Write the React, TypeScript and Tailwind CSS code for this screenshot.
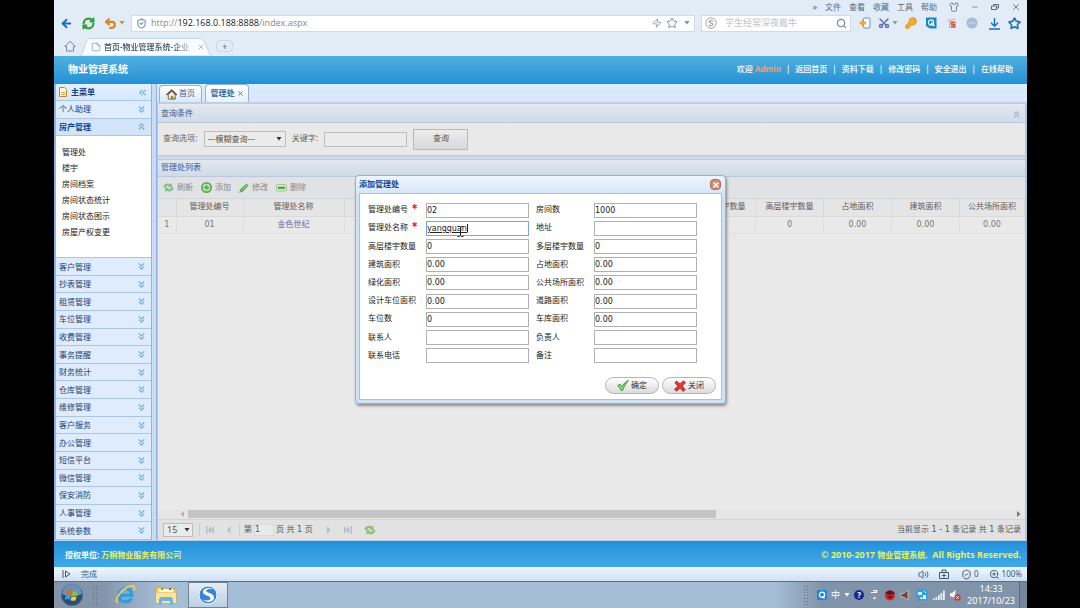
import { useState } from 'react';
import type { ReactNode } from 'react';
import {
  ArrowLeft,
  ChevronsDown,
  ChevronsLeft,
  ChevronsUp,
  CirclePlus,
  KeyRound,
  Minus,
  RefreshCw,
  Scissors,
  Search,
  ShieldCheck,
  Shirt,
  Star,
  StickyNote,
  Undo2,
  Volume2,
  X,
  Zap,
  ZoomIn,
} from 'lucide-react';

const subMenu = ['管理处', '楼宇', '房间档案', '房间状态统计', '房间状态图示', '房屋产权变更'];

const modules = [
  '客户管理', '抄表管理', '租赁管理', '车位管理', '收费管理', '事务提醒', '财务统计', '仓库管理',
  '维修管理', '客户服务', '办公管理', '短信平台', '微信管理', '保安消防', '人事管理', '系统参数',
];

const headerLinks = ['返回首页', '资料下载', '修改密码', '安全退出', '在线帮助'];

interface FieldDef {
  name: string;
  label: string;
  value: string;
  required?: boolean;
}

const fields: FieldDef[] = [
  { name: 'code', label: '管理处编号', value: '02', required: true },
  { name: 'rooms', label: '房间数', value: '1000' },
  { name: 'title', label: '管理处名称', value: 'yangquan', required: true },
  { name: 'address', label: '地址', value: '' },
  { name: 'highRise', label: '高层楼宇数量', value: '0' },
  { name: 'multiStorey', label: '多层楼宇数量', value: '0' },
  { name: 'buildArea', label: '建筑面积', value: '0.00' },
  { name: 'landArea', label: '占地面积', value: '0.00' },
  { name: 'greenArea', label: '绿化面积', value: '0.00' },
  { name: 'publicArea', label: '公共场所面积', value: '0.00' },
  { name: 'parkingArea', label: '设计车位面积', value: '0.00' },
  { name: 'roadArea', label: '道路面积', value: '0.00' },
  { name: 'parkingCount', label: '车位数', value: '0' },
  { name: 'garageArea', label: '车库面积', value: '0.00' },
  { name: 'contact', label: '联系人', value: '' },
  { name: 'manager', label: '负责人', value: '' },
  { name: 'phone', label: '联系电话', value: '' },
  { name: 'remark', label: '备注', value: '' },
];

const columns = [
  { title: '', value: '1', width: 'w-[18px]' },
  { title: '管理处编号', value: '01', width: 'w-[67px]' },
  { title: '管理处名称', value: '金色世纪', width: 'w-[101px]' },
  { title: '', value: '', width: '' },
  { title: '多层楼宇数量', value: '', width: 'w-[68px]' },
  { title: '高层楼宇数量', value: '0', width: 'w-[68px]' },
  { title: '占地面积', value: '0.00', width: 'w-[68px]' },
  { title: '建筑面积', value: '0.00', width: 'w-[68px]' },
  { title: '公共场所面积', value: '0.00', width: 'w-[65px]' },
];

const Caret = ({ className = '' }: { className?: string }) => (
  <svg viewBox="0 0 6 4" className={`h-1 w-1.5 shrink-0 ${className}`} fill="currentColor">
    <path d="M0.5 0h5L3 3.6z" />
  </svg>
);

const Recycle = ({ className = '' }: { className?: string }) => (
  <svg viewBox="0 0 14 12" className={className} fill="currentColor">
    <path d="M.5 6C.5 1.500 6-.5 9.500 1.800L11 .3l.8 5.600-5.600-.6 1.500-1.500C6 3 4 4 3.700 6z" />
    <path d="M13.500 6C13.500 10.500 8 12.500 4.500 10.200L3 11.700l-.8-5.600 5.600.6-1.500 1.500C8 9 10 8 10.300 6z" />
  </svg>
);

const BrowserChrome = () => (
  <header className="bg-[#e1ecf6] text-[#56687f]">
    <div className="flex h-[14px] items-center justify-end pr-[6px] text-[8px]">
      <span className="mr-2 text-[9px]">»</span>
      <nav className="flex gap-2">
        {['文件', '查看', '收藏', '工具', '帮助'].map((item) => (
          <a key={item} href="#">
            {item}
          </a>
        ))}
      </nav>
      <Shirt className="ml-3 h-2.5 w-2.5" strokeWidth={1.8} />
      <Minus className="ml-3 h-2 w-2" />
      <svg viewBox="0 0 8 8" className="ml-3 h-2 w-2" fill="none" stroke="currentColor">
        <path d="M2.500 2.500v-1h5v3.500h-2M.5 3h5v3.500h-5z" />
      </svg>
      <X className="ml-3 h-2.5 w-2.5" />
    </div>

    <div className="flex h-[18px] items-center pr-[6px]">
      <button className="ml-1.5" aria-label="后退">
        <ArrowLeft className="h-[13px] w-[13px] text-[#1c70b8]" strokeWidth={3.5} />
      </button>
      <button className="ml-[9px]" aria-label="刷新">
        <RefreshCw className="h-[13px] w-[13px] text-[#2fa336]" strokeWidth={4} />
      </button>
      <button className="ml-[9px] flex items-center gap-0.5" aria-label="恢复">
        <Undo2 className="h-[13px] w-[13px] text-[#dd8423]" strokeWidth={4} />
        <Caret className="text-[#dd8423]" />
      </button>
      <div className="ml-1.5 flex h-[17px] flex-1 items-center border border-[#cfdbe8] bg-white pl-1 pr-1">
        <ShieldCheck className="h-[11px] w-[11px] text-[#6f9cc4]" strokeWidth={2.5} />
        <div className="ml-1 flex-1 font-['Open_Sans'] text-[9px] text-[#888]">
          http://<span className="text-[#222]">192.168.0.188:8888</span>/index.aspx
        </div>
        <Zap className="h-2.5 w-2.5 text-[#7590ac]" />
        <Star className="ml-1 h-3 w-3 text-[#6d8bac]" />
        <Caret className="ml-1.5 text-[#7a8ea5]" />
      </div>
      <div className="ml-1.5 flex h-[17px] w-[150px] items-center border border-[#cfdbe8] bg-white px-[3px]">
        <svg viewBox="0 0 12 12" className="h-3 w-3 shrink-0" fill="none" stroke="#a5a5a5">
          <circle cx="6" cy="6" r="5.200" />
          <path d="M8 4C6.500 3 4 3.500 4.200 4.700 4.400 6 7.900 5.800 7.900 7.300 7.900 8.800 5 8.900 3.900 7.800" strokeWidth="1.300" />
        </svg>
        <input
          type="text"
          aria-label="搜索"
          placeholder="学生经常深夜搬牛"
          className="ml-2 min-w-0 flex-1 text-[9px] outline-none placeholder:text-[#bfc3c8]"
        />
        <Search className="h-[11px] w-[11px] shrink-0 text-[#6a89a8]" strokeWidth={2.5} />
      </div>
      <div className="ml-2 flex items-center">
        <svg viewBox="0 0 12 12" className="h-3 w-3">
          <rect x="4.500" y="1" width="6.500" height="10" rx="1" fill="#f5f9fc" stroke="#6b90b8" />
          <path d="M0 6l4.500-4v2.500H7v3H4.500V10z" fill="#efac35" />
        </svg>
        <Scissors className="ml-[7px] h-3 w-3 -rotate-90 text-[#5e72b6]" strokeWidth={3} />
        <Caret className="ml-0.5 text-[#8a98aa]" />
        <KeyRound className="ml-[7px] h-3 w-3 fill-[#f2b04a] text-[#eca22c]" strokeWidth={3.5} />
        <svg viewBox="0 0 12 12" className="ml-2 h-3 w-3">
          <path d="M1 .5h10.500v11H5L1 9z" fill="#1b86c2" />
          <circle cx="6" cy="5.500" r="2.600" fill="none" stroke="#fff" strokeWidth="1.200" />
          <path d="M6 5.500l3.500 3.500" stroke="#fff" strokeWidth="1.200" />
        </svg>
        <svg viewBox="0 0 12 12" className="ml-[9px] h-3 w-3" fill="none">
          <path d="M1.500 3.500l8-1.500M3.500 4.500h6v6h-6z" stroke="#e9a29a" />
          <path d="M8.500 5.500H5.500v2h3v2H5" stroke="#e0483a" strokeWidth="1.300" />
        </svg>
        <svg viewBox="0 0 12 12" className="ml-2 h-3 w-3">
          <circle cx="6" cy="6" r="5.500" fill="#a5bbd6" />
          <path d="M3 6h1.200M5.400 6h1.200M7.800 6H9" stroke="#fff" strokeWidth="1.200" />
        </svg>
        <svg viewBox="0 0 13 13" className="ml-[10px] h-[13px] w-[13px]" fill="none" stroke="#1c70b8" strokeWidth="1.400">
          <path d="M6.500 1v8M3 5.800l3.500 3.500L10 5.800M1 12h11" />
        </svg>
        <Star className="ml-[7px] h-[13px] w-[13px] text-[#1c70b8]" strokeWidth={3} />
      </div>
    </div>

    <div className="flex h-6 items-end">
      <svg viewBox="0 0 12 12" className="mb-1 ml-[10px] h-3 w-3" fill="none" stroke="#7088a2">
        <path d="M.8 6.500L6 1.200l5.200 5.300H9.500V11h-7V6.500z" strokeLinejoin="round" />
      </svg>
      {/* slanted tab with the page title fading out under the close mark */}
      <div className="relative ml-1 flex h-[18px] w-[132px] items-center pl-[11px]">
        <svg viewBox="0 0 132 18" preserveAspectRatio="none" className="absolute inset-0 h-full w-full">
          <path d="M0 18C4 16 5 2 9 .5h112C125 2 128 16 132 18z" fill="#fafdff" stroke="#c6d4e4" />
        </svg>
        <StickyNote className="relative h-2.5 w-2.5 text-[#84a5c9]" />
        <span className="relative ml-[3px] whitespace-nowrap bg-gradient-to-r from-[#33475c] from-80% to-[#b4c2d0] bg-clip-text text-[8px] font-medium text-transparent">
          首页-物业管理系统-企业
        </span>
        <X className="relative ml-2 h-2 w-2 text-[#8c9aaa]" />
      </div>
      <button
        aria-label="新标签页"
        className="mb-1 ml-1 flex h-3 w-[17px] items-center justify-center rounded-sm border border-[#cbd7e5] text-[9px] leading-none"
      >
        +
      </button>
    </div>
  </header>
);

const SideItem = ({ label, open = false }: { label: string; open?: boolean }) => (
  <button
    className={`flex min-h-4 w-full flex-1 items-center justify-between border-b border-[#a9c6ea] pl-[3px] pr-1 text-left text-[8px] leading-none ${
      open ? 'bg-[#d3e3f8] font-bold text-[#15428b]' : 'bg-[#dfecfd] text-[#1f3f70]'
    }`}
  >
    {label}
    {open ? (
      <ChevronsUp className="h-[11px] w-[11px] text-[#74aedb]" strokeWidth={2.5} />
    ) : (
      <ChevronsDown className="h-[11px] w-[11px] text-[#74aedb]" strokeWidth={2.5} />
    )}
  </button>
);

const Sidebar = () => (
  <aside className="flex w-[98px] shrink-0 flex-col border-l-2 border-r border-[#8db2e3] bg-[#dfecfd]">
    <div className="flex h-[17px] items-center justify-between border-b border-[#a9c6ea] bg-gradient-to-b from-[#e2f1ff] to-[#d6e8fc] px-[3px] text-[8px] font-bold text-[#15428b]">
      <svg viewBox="0 0 8 10" className="h-2.5 w-2">
        <path d="M.5.5h5l2 2v7h-7z" fill="#fff8dc" stroke="#b98a2e" />
        <path d="M2 7.500h4M2 5.500h4" stroke="#e3a93c" />
      </svg>
      <span className="ml-1 flex-1">主菜单</span>
      <ChevronsLeft className="h-[11px] w-[11px] text-[#74aedb]" strokeWidth={2.5} />
    </div>
    <SideItem label="个人助理" />
    <SideItem label="房产管理" open />
    <ul className="min-h-[122px] border-b border-[#a9c6ea] bg-white pl-1.5 pt-2 text-[8px] leading-4 text-[#222]">
      {subMenu.map((item) => (
        <li key={item}>
          <a href="#">{item}</a>
        </li>
      ))}
    </ul>
    {modules.map((item) => (
      <SideItem key={item} label={item} />
    ))}
  </aside>
);

const ToolButton = ({ icon, label }: { icon: ReactNode; label: string }) => (
  <button className="flex items-center gap-[3px]">
    {icon}
    {label}
  </button>
);

const PanelTitle = ({ title, children }: { title: string; children?: ReactNode }) => (
  <div className="flex h-[17px] items-center justify-between border-b border-[#b9c8dc] bg-gradient-to-b from-[#e2e7ee] to-[#d1dae7] px-[3px] text-[8px] font-medium text-[#5b74a0]">
    <h2>{title}</h2>
    {children}
  </div>
);

const PagerMark = ({ d }: { d: string }) => (
  <svg viewBox="0 0 8 8" className="h-2 w-2" fill="#b4bfce">
    <path d={d} />
  </svg>
);

const Workspace = () => (
  <section className="flex min-w-0 flex-1 flex-col font-['DejaVu_Sans','Noto_Sans_CJK_SC',sans-serif]">
    <div className="flex h-5 items-end gap-[3px] border-b-2 border-[#b9cfea] bg-gradient-to-b from-[#d7f1ff] to-[#dbe8fc] to-40% pl-0.5 text-[8px] text-[#41669c]">
      <button className="flex h-[17px] w-[43px] items-center justify-center gap-0.5 rounded-t-sm border border-b-0 border-[#8db2e3] bg-gradient-to-b from-white to-[#d9e8fb]">
        <svg viewBox="0 0 12 12" className="h-[11px] w-[11px]">
          <path d="M2.500 6v5h7.500V6L6.200 2.500z" fill="#f7f0dc" stroke="#6b5a43" />
          <path d="M.5 6.500L6.200 1.200 11.800 6.500" fill="none" stroke="#504335" strokeWidth="1.400" />
          <path d="M5.200 7.500h2.300V11H5.200z" fill="#a9702e" />
          <path d="M8 9h2.500v2H8z" fill="#69a83b" />
        </svg>
        首页
      </button>
      <button className="flex h-[18px] w-11 items-center justify-center gap-0.5 rounded-t-sm border border-b-0 border-[#8db2e3] bg-gradient-to-b from-white to-[#e6f1ff] font-bold">
        管理处
        <X className="h-[7px] w-[7px]" strokeWidth={3} />
      </button>
    </div>

    <div className="flex flex-1 flex-col border-l border-r-2 border-[#b5c7de] bg-[#e9e9e9] pt-0.5 text-[#666]">
      <PanelTitle title="查询条件">
        <ChevronsUp className="h-[11px] w-[11px] text-[#93bcd6]" strokeWidth={2.5} />
      </PanelTitle>
      <form className="flex h-8 items-center pl-[5px] text-[8px]">
        <label htmlFor="queryType">查询选项:</label>
        <span className="relative ml-1.5 flex items-center">
          <select
            id="queryType"
            className="h-4 w-[82px] appearance-none border border-[#bdbdbd] bg-[#ebebeb] pl-[3px] font-['Noto_Sans','Noto_Sans_CJK_SC',sans-serif] text-[8px] leading-[14px] text-[#555]"
          >
            <option>---模糊查询---</option>
          </select>
          <Caret className="pointer-events-none absolute right-1 text-[#333]" />
        </span>
        <label htmlFor="keyword" className="ml-1.5">
          关键字:
        </label>
        <input id="keyword" type="text" className="ml-1.5 h-[15px] w-[83px] border border-[#bdbdbd] bg-[#ebebeb]" />
        <button
          type="button"
          className="ml-1.5 h-[21px] w-[55px] border border-[#b9b9b9] bg-gradient-to-b from-[#ececec] to-[#d9d9d9] text-[#555]"
        >
          查询
        </button>
      </form>

      <div className="h-[5px] border-y border-[#bccadc] bg-[#cfdae8]" />
      <PanelTitle title="管理处列表" />
      <div className="flex h-[22px] items-center gap-2 border-b border-[#d2d5da] bg-[#e1e2e4] pl-[5px] text-[8px] text-[#888]">
        <ToolButton icon={<Recycle className="h-[11px] w-[11px] text-[#86bd86]" />} label="刷新" />
        <ToolButton
          icon={<CirclePlus className="h-[11px] w-[11px] fill-[#cfe6ca] text-[#5faa57]" strokeWidth={4} />}
          label="添加"
        />
        <ToolButton
          icon={
            <svg viewBox="0 0 10 10" className="h-2.5 w-2.5">
              <path d="M0 10l1.500-4L7.500.5 9.500 2.500 4 8.500z" fill="#5ca856" />
              <path d="M2.500 7L8 1.800" stroke="#a5d49c" />
            </svg>
          }
          label="修改"
        />
        <ToolButton
          icon={
            <svg viewBox="0 0 11 8" className="h-2 w-[11px]">
              <rect x=".5" y=".5" width="10" height="6.500" rx="1" fill="#d4e8d0" stroke="#9cc996" />
              <path d="M2 3.800h7" stroke="#4f9f48" strokeWidth="2.200" />
            </svg>
          }
          label="删除"
        />
      </div>

      <table className="w-full table-fixed border-collapse text-[8px]">
        <thead>
          <tr className="h-[17px] bg-[#e5e5e5]">
            {columns.map((col, i) => (
              <th key={i} className={`whitespace-nowrap border-b border-r border-[#dadada] p-0 font-normal text-[#5c5c5c] ${col.width}`}>
                {col.title}
              </th>
            ))}
          </tr>
        </thead>
        <tbody>
          <tr className="h-[17px]">
            {columns.map((col, i) => (
              <td
                key={i}
                className={`border-b border-r border-[#e0e0e0] p-0 text-center ${
                  i === 2 ? 'text-[#6666a8]' : 'text-[#777]'
                }`}
              >
                {col.value}
              </td>
            ))}
          </tr>
        </tbody>
      </table>

      <div className="flex-1" />
      <div className="flex h-[10px] items-center bg-[#e6e6e6] pl-[22px] pr-1">
        <svg viewBox="0 0 4 6" className="h-1.5 w-1" fill="#b5b5b5">
          <path d="M4 0v6L.5 3z" />
        </svg>
        <div className="mx-1 flex-1">
          <div className="h-2 w-[64%] bg-[#c5c5c5]" />
        </div>
        <svg viewBox="0 0 4 6" className="h-1.5 w-1" fill="#777">
          <path d="M0 0v6l3.500-3z" />
        </svg>
      </div>

      <div className="flex h-[21px] items-center border-t border-[#d3d3d3] bg-[#e2e2e2] pl-[5px] pr-1 text-[8px] text-[#555]">
        <span className="relative flex items-center">
          <select
            aria-label="每页条数"
            className="h-[14px] w-[30px] appearance-none border border-[#bcbcbc] bg-[#ebebeb] pl-[3px] font-['Noto_Sans'] text-[9px] leading-3"
          >
            <option>15</option>
          </select>
          <Caret className="pointer-events-none absolute right-[3px] text-[#333]" />
        </span>
        <span className="ml-1.5 h-3 border-l border-[#cfcfcf]" />
        <button className="ml-1.5" aria-label="首页">
          <PagerMark d="M0 0h1.500v8H0zM5 0v8L2 4zM8 0v8L5 4z" />
        </button>
        <button className="ml-[11px]" aria-label="上一页">
          <PagerMark d="M5.500 0v8L2 4z" />
        </button>
        <span className="ml-1.5 h-3 border-l border-[#cfcfcf]" />
        <label htmlFor="pageNo" className="ml-1">
          第
        </label>
        <input
          id="pageNo"
          type="text"
          defaultValue="1"
          className="ml-0.5 h-3 w-5 border border-[#dadada] bg-[#e9e9e9] text-[8px]"
        />
        <span className="ml-0.5">页 共 1 页</span>
        <button className="ml-3" aria-label="下一页">
          <PagerMark d="M2 0v8l3.500-4z" />
        </button>
        <button className="ml-[11px]" aria-label="末页">
          <PagerMark d="M0 0v8l3-4zM3 0v8l3-4zM6.500 0H8v8H6.500z" />
        </button>
        <button className="ml-3" aria-label="刷新">
          <Recycle className="h-2.5 w-3 text-[#8fc07c]" />
        </button>
        <span className="ml-auto">当前显示 1 - 1 条记录 共 1 条记录</span>
      </div>
    </div>
  </section>
);

const AddDialog = () => {
  const [values, setValues] = useState<Record<string, string>>(
    Object.fromEntries(fields.map((f) => [f.name, f.value]))
  );

  return (
    <div className="absolute inset-0 flex items-start justify-center pt-[91px] font-['DejaVu_Sans','Noto_Sans_CJK_SC',sans-serif]">
      <div
        role="dialog"
        aria-label="添加管理处"
        className="w-[371px] rounded border border-[#8fb4dc] bg-gradient-to-b from-[#eef5ff] to-[#cfe1f7] to-10% px-[3px] pb-[3px] shadow-[1px_2px_3px_rgba(0,0,0,0.4)]"
      >
        <div className="flex h-[17px] items-center justify-between pr-px">
          <h2 className="text-[8px] font-bold text-[#15428b]">添加管理处</h2>
          <button
            aria-label="关闭窗口"
            className="flex h-[11px] w-[11px] items-center justify-center rounded-sm border border-[#b4664e] bg-[#d68d76] text-white"
          >
            <X className="h-2 w-2" strokeWidth={4} />
          </button>
        </div>
        <form className="border border-[#a3c3e6] bg-white pb-[5px] pl-2 pr-[5px] pt-[7px]">
          <div className="grid h-[164px] w-[336px] grid-cols-2 grid-rows-9">
            {fields.map((f) => (
              <div key={f.name} className="relative flex items-center">
                <label htmlFor={f.name} className="w-[58px] whitespace-nowrap text-[8px] text-[#222]">
                  {f.label}
                  {f.required && <span className="ml-1 text-[10px] font-bold leading-none text-red-600">*</span>}
                </label>
                <input
                  id={f.name}
                  type="text"
                  value={values[f.name]}
                  onChange={(e) => setValues({ ...values, [f.name]: e.target.value })}
                  className={`h-[15px] w-[103px] border text-[8px] text-[#222] outline-none ${
                    f.name === 'title' ? 'border-[#7ba4d8] underline' : 'border-[#b0b0b0]'
                  }`}
                />
                {f.name === 'title' && (
                  <svg viewBox="0 0 14 14" className="absolute left-[88px] top-1 h-[14px] w-[14px]" fill="none" stroke="#222">
                    <path d="M1.500 3.500h2l1 1 1-1h2M4.500 4.500v8M1.500 13.500h2l1-1 1 1h2" />
                    <path d="M11.500 1v8.500" />
                  </svg>
                )}
              </div>
            ))}
          </div>
          <div className="mt-3 flex justify-end gap-[3px] text-[8px] text-[#333]">
            <button
              type="button"
              className="flex h-[17px] w-[54px] items-center justify-center gap-0.5 rounded-full border border-[#b5b5b5] bg-gradient-to-b from-white to-[#dcdcdc]"
            >
              <svg viewBox="0 0 12 11" className="h-[11px] w-3">
                <path d="M.8 5.500L3 4.200l2 2.600C6.500 4 8.500 1.800 11.500.5 9 3.500 7 6.500 5.500 10.500H4.200C3.200 8.500 2 6.800.8 5.500z" fill="#8bd67a" stroke="#3b9a35" />
              </svg>
              确定
            </button>
            <button
              type="button"
              className="flex h-[17px] w-[54px] items-center justify-center gap-0.5 rounded-full border border-[#b5b5b5] bg-gradient-to-b from-white to-[#dcdcdc]"
            >
              <svg viewBox="0 0 12 12" className="h-3 w-3">
                <path d="M2.500 1l3.500 3L9.500.8l2 2L8.200 6l3 3.500-2 2L6 8.200l-3.500 3-2-2L4 6 .8 3z" fill="#e23b35" stroke="#a31f1c" strokeWidth=".8" />
              </svg>
              关闭
            </button>
          </div>
        </form>
      </div>
    </div>
  );
};

const TaskBar = () => (
  <footer className="flex h-[27px] items-center border-t border-[#5d7085] bg-[linear-gradient(90deg,#8495ab_5%,#a6bdd8_11%,#a6bdd8_74%,#8193a9_79%)] pl-1.5">
    <button aria-label="开始">
      <svg viewBox="0 0 24 24" className="h-6 w-6">
        <circle cx="12" cy="12" r="11" fill="#28506f" stroke="#5d87a5" />
        <path d="M2 11a10 10 0 0120 0c-6 3-14 3-20 0z" fill="#6a93b3" />
        <path d="M7 7.500c2-1 3.500-.8 5 0l-1 4.200c-1.500-.8-3-.8-5 0z" fill="#e8622c" />
        <path d="M12.800 8c1.700.8 3 .8 5 0l-1 4.200c-2 .8-3.300.8-5 0z" fill="#86c440" />
        <path d="M5.800 12.700c2-.9 3.500-.8 5 0l-1 4c-1.500-.8-3-.8-5 0z" fill="#3c9fe0" />
        <path d="M11.600 13.200c1.700.8 3.100.8 5 0l-1 4c-2 .8-3.300.8-5 0z" fill="#fcc937" />
      </svg>
    </button>
    <div className="ml-2 h-5 w-1.5 bg-[radial-gradient(#5f7288_1px,transparent_1px)] bg-[size:3px_3px]" />
    <button className="ml-4" aria-label="Internet Explorer">
      <svg viewBox="0 0 24 24" className="h-[22px] w-[22px]" fill="none">
        <path d="M5.500 12.500h14C19.800 8 17 5 12.700 5 8.600 5 5.500 8 5.500 12.300c0 4.300 3 7.200 7.200 7.200 3 0 5.200-1.500 6.300-3.900" stroke="#2b9fe2" strokeWidth="3.600" />
        <path d="M7.500 8.500C8.800 6.300 11 5.200 13.500 5.300" stroke="#8ed2f6" strokeWidth="1.500" />
        <path d="M4 20.500C-1.500 18 11 1.500 20.500 2c2.500.3 2.200 3 1 5" stroke="#f6cf45" strokeWidth="1.900" />
      </svg>
    </button>
    <button className="ml-[18px]" aria-label="资源管理器">
      <svg viewBox="0 0 24 22" className="h-[22px] w-6">
        <path d="M2 3h7l1 2h12v14H2z" fill="#eed27a" stroke="#caa548" />
        <path d="M5 5h14v3H5z" fill="#fff7df" />
        <path d="M7 4h2v2H7z" fill="#5aa94f" />
        <path d="M15 4h2v2h-2z" fill="#c8503e" />
        <path d="M2 9h20v10H2z" fill="#f7e4a0" />
        <path d="M5 21v-5c0-2 1-3 3-3h8c2 0 3 1 3 3v5h-3v-4H8v4z" fill="#6fb5d8" />
      </svg>
    </button>
    <button
      aria-label="搜狗浏览器"
      className="ml-[10px] flex h-[26px] w-10 items-center justify-center border border-[#6f8298] bg-gradient-to-b from-[#e4ecf5] to-[#bccfe3]"
    >
      <svg viewBox="0 0 20 20" className="h-5 w-5">
        <circle cx="10" cy="10" r="9" fill="#3b84d6" stroke="#f4f8fc" />
        <path d="M15.500 4.500C11 1.500 4.500 3 5 7.200c.5 3.600 7.500 3.200 7.500 6 0 2.300-4 3-8 1.300 3.500 4 11.500 3 11.500-2 0-4.800-7.800-4.100-7.800-6.700C8.200 4 12 3.500 15.500 4.500z" fill="#fff" />
      </svg>
    </button>
    <div className="ml-auto h-5 w-1.5 bg-[radial-gradient(#5f7288_1px,transparent_1px)] bg-[size:3px_3px]" />
    <div className="ml-2 flex items-center text-[9px] text-white">
      <svg viewBox="0 0 10 10" className="h-2.5 w-2.5" fill="none" stroke="#fff" strokeWidth="1.300">
        <rect width="10" height="10" rx="1" fill="#1f84de" stroke="none" />
        <circle cx="5" cy="4.700" r="2.600" />
        <path d="M5.500 6.500l2 2" />
      </svg>
      <span className="ml-1">中</span>
      <Caret className="ml-1" />
      <span className="ml-1 flex h-[10px] w-[10px] items-center justify-center rounded-full bg-[#142a8c] text-[8px] font-bold leading-none">
        ?
      </span>
      <svg viewBox="0 0 8 12" className="ml-1.5 h-3 w-2" fill="none" stroke="#fff">
        <path d="M1 3.500h4v-2M3 1.500h4v2H5" />
        <path d="M2.500 8.500h4l-2 2z" fill="#fff" stroke="none" />
      </svg>
      <svg viewBox="0 0 12 12" className="ml-1.5 h-3 w-3">
        <circle cx="6" cy="6.500" r="5" fill="#d02222" />
        <path d="M1 4.500C3 .5 9 .5 11 4.500L6 6z" fill="#5b1a1a" />
        <path d="M3 7.500h6L6 9.500z" fill="#341010" />
      </svg>
      <svg viewBox="0 0 12 12" className="ml-1 h-3 w-3">
        <path d="M1 4.500h2.500L8 1v10L3.500 8H1z" fill="#6b4a3a" stroke="#e7d3c4" strokeWidth=".7" />
        <path d="M9.500 4c1 1.200 1 3 0 4" stroke="#e88f3c" fill="none" />
      </svg>
      <svg viewBox="0 0 12 12" className="ml-1 h-3 w-3">
        <rect x=".5" y=".5" width="11" height="11" rx="1.500" fill="#2ba2df" />
        <path d="M2 3h4v3H2zM7 6h3v4H4V8.500h3z" fill="#d9f0fb" />
        <path d="M8 2l2 2" stroke="#fff" />
      </svg>
      <svg viewBox="0 0 12 10" className="ml-[5px] h-2.5 w-3" fill="#e8eef5">
        <path d="M0 10V8.500h1.800V10zM2.500 10V7h1.800v3zM5 10V5h1.800v5zM7.500 10V3h1.800v7zM10 10V.5h1.800V10z" />
      </svg>
      <svg viewBox="0 0 12 12" className="ml-1 h-3 w-3">
        <path d="M1 4h2l3.500-3v9L3 7.500H1z" fill="#f3f6fa" />
        <circle cx="8.500" cy="8.500" r="3.200" fill="#d8342b" />
        <path d="M7.200 7.200l2.600 2.600M9.800 7.200L7.200 9.800" stroke="#fff" />
      </svg>
      <div className="ml-1.5 mr-1 text-center leading-3">
        <div>14:33</div>
        <div>2017/10/23</div>
      </div>
      <div className="h-[26px] w-2 border-l border-[#566a80] bg-[#74869c]" />
    </div>
  </footer>
);

const App = () => {
  return (
    <div className="min-h-screen bg-black pl-[54px] pr-[53px] font-['Noto_Sans','Noto_Sans_CJK_SC',sans-serif]">
      <div className="flex min-h-screen flex-col bg-[#dfe8f6]">
        <BrowserChrome />

        <div className="flex h-7 items-center justify-between bg-gradient-to-b from-[#50b0e0] to-[#2390d4] pb-0.5 pl-[14px] pr-[14px] text-white">
          <h1 className="text-[10px] font-bold">物业管理系统</h1>
          <nav className="flex items-center text-[8px] font-medium">
            <span>
              欢迎 <b className="text-[#f0a060]">Admin</b>
            </span>
            {headerLinks.map((link) => (
              <span key={link} className="flex">
                <span className="px-[5px]">|</span>
                <a href="#">{link}</a>
              </span>
            ))}
          </nav>
        </div>

        <main className="relative flex flex-1 bg-[#b9cfea] pb-px">
          <Sidebar />
          <div className="w-[5px] shrink-0 border-r border-[#8db2e3] bg-[#c9dcf4]" />
          <Workspace />
          <AddDialog />
        </main>

        <div className="flex h-[26px] items-center justify-between bg-gradient-to-b from-[#2391da] to-[#42a9e8] pl-[11px] pr-1.5 pt-0.5 text-[8px] font-bold text-[#e6f25a]">
          <p>
            <span className="text-white">授权单位:</span> 万桐物业服务有限公司
          </p>
          <p className="text-[9px]">
            © 2010-2017 <span className="text-[8px]">物业管理系统.</span>&nbsp; All Rights Reserved.
          </p>
        </div>

        <div className="flex h-[14px] items-center bg-gradient-to-b from-[#f1f8fe] to-[#cfe1f3] pl-2 pr-[5px] text-[8px] text-[#3d5878]">
          <svg viewBox="0 0 9 8" className="h-2 w-[9px]" fill="none" stroke="currentColor">
            <path d="M1 0v8M3.500 1v6L8 4z" />
          </svg>
          <span className="ml-2.5">完成</span>
          <div className="ml-auto flex items-center">
            <Volume2 className="h-[11px] w-[11px]" />
            <svg viewBox="0 0 10 10" className="ml-2.5 h-2.5 w-2.5" fill="none" stroke="currentColor">
              <path d="M.5 3.500h9v6h-9zM3 3.500V1h4v2.500M5 4.500v4M3 6.500h4" />
            </svg>
            <ShieldCheck className="ml-3 h-[11px] w-[11px]" />
            <span className="ml-0.5">0</span>
            <ZoomIn className="ml-2.5 h-[11px] w-[11px]" />
            <span className="ml-0.5">100%</span>
          </div>
        </div>

        <TaskBar />
      </div>
    </div>
  );
};

export default App;
